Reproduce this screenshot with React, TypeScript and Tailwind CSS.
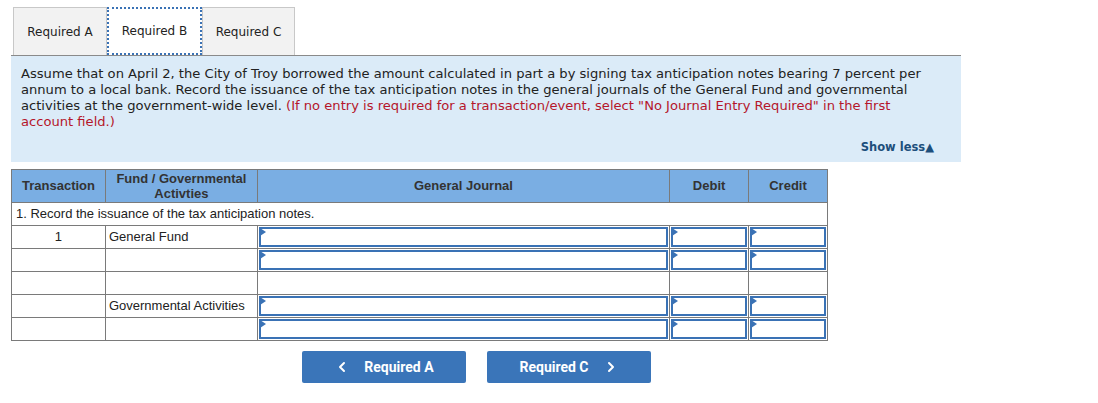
import { ChevronLeft, ChevronRight } from "lucide-react";

const verdana = { fontFamily: '"DejaVu Sans", Verdana, sans-serif' };
const arial = { fontFamily: '"Liberation Sans", Arial, sans-serif' };

const cell = "border border-[#7a7a7a] h-[23px] p-0 align-middle";

function InputCell() {
  return (
    <td className={cell + " relative"}>
      <div className="absolute inset-[1px] border-2 border-[#3a72b5] bg-white" />
      <div className="absolute left-[2px] top-[2px] h-0 w-0 border-y-[4px] border-l-[6px] border-y-transparent border-l-[#3a72b5]" />
    </td>
  );
}

function Row({ tx, fund, inputs }: { tx?: string; fund?: string; inputs: boolean }) {
  return (
    <tr>
      <td className={cell + " text-center"}>{tx}</td>
      <td className={cell + " pl-[3px]"}>{fund}</td>
      {inputs ? (
        <>
          <InputCell />
          <InputCell />
          <InputCell />
        </>
      ) : (
        <>
          <td className={cell} />
          <td className={cell} />
          <td className={cell} />
        </>
      )}
    </tr>
  );
}

export default function App() {
  return (
    <div className="min-h-[403px] w-[1098px] bg-white pt-[7px]">
      <div className="ml-[13px] flex h-[48px] text-[12px] text-[#222]" style={verdana}>
        <div className="flex w-[94px] items-center justify-center border border-b-0 border-[#c8c8c8] bg-[#f2f2f2]">Required A</div>
        <div className="flex w-[95px] items-center justify-center border-2 border-dotted border-[#3a72b5] bg-white">Required B</div>
        <div className="flex w-[93px] items-center justify-center border border-b-0 border-[#c8c8c8] bg-[#f2f2f2]">Required C</div>
      </div>
      <div className="ml-[11px] w-[950px] border-t border-[#8a8a8a]" />
      <div className="ml-[11px] w-[950px] bg-[#dbebf8] px-[10px] pt-[10px] pb-[7px] text-[13.1px] leading-[16px] text-[#222]" style={verdana}>
        <p className="w-[903px]">
          Assume that on April 2, the City of Troy borrowed the amount calculated in part a by signing tax anticipation notes bearing 7 percent per annum to a local bank. Record the issuance of the tax anticipation notes in the general journals of the General Fund and governmental activities at the government-wide level.{" "}
          <span className="text-[#b5162b]">(If no entry is required for a transaction/event, select "No Journal Entry Required" in the first account field.)</span>
        </p>
        <div className="mt-[9px] pr-[17px] text-right text-[11.5px] font-bold text-[#1d4f7c]">Show less▲</div>
      </div>

      <table className="ml-[11px] mt-[7px] w-[817px] border-collapse text-[13px] text-[#222]" style={arial}>
        <colgroup>
          <col className="w-[94px]" />
          <col className="w-[152px]" />
          <col className="w-[413px]" />
          <col className="w-[79px]" />
          <col className="w-[79px]" />
        </colgroup>
        <thead>
          <tr className="h-[33px] bg-[#7aaee3] font-bold text-[#333]">
            <th className="border border-[#7a7a7a] font-bold">Transaction</th>
            <th className="border border-[#7a7a7a] font-bold leading-[15px]">Fund / Governmental<br />Activties</th>
            <th className="border border-[#7a7a7a] font-bold">General Journal</th>
            <th className="border border-[#7a7a7a] font-bold">Debit</th>
            <th className="border border-[#7a7a7a] font-bold">Credit</th>
          </tr>
        </thead>
        <tbody>
          <tr>
            <td colSpan={5} className={cell + " pl-[4px]"}>1. Record the issuance of the tax anticipation notes.</td>
          </tr>
          <Row tx="1" fund="General Fund" inputs />
          <Row inputs />
          <Row inputs={false} />
          <Row fund="Governmental Activities" inputs />
          <Row inputs />
        </tbody>
      </table>

      <div className="ml-[302px] mt-[10px] flex gap-[21px] text-[14px] font-bold text-white" style={{ fontFamily: "Roboto, sans-serif" }}>
        <button className="flex h-[32px] w-[164px] items-center justify-center gap-[14px] rounded-[2px] bg-[#3a75b9]">
          <ChevronLeft size={16} strokeWidth={3} />
          Required A
        </button>
        <button className="flex h-[32px] w-[164px] items-center justify-center gap-[14px] rounded-[2px] bg-[#3a75b9]">
          Required C
          <ChevronRight size={16} strokeWidth={3} />
        </button>
      </div>
    </div>
  );
}
